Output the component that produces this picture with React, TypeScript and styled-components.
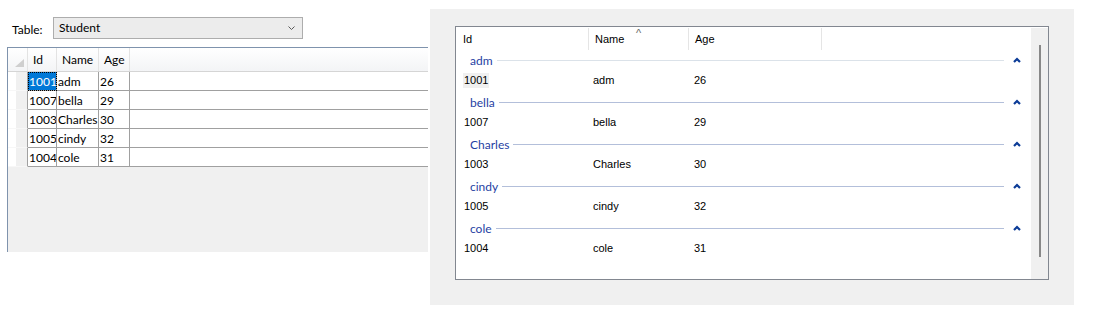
import React from 'react';
import styled, { createGlobalStyle } from 'styled-components';

const GlobalStyle = createGlobalStyle`
  html, body {
    margin: 0;
    padding: 0;
    background: #ffffff;
  }
  #root {
    width: 1095px;
    height: 320px;
    overflow: hidden;
  }
`;

type Student = { id: string; name: string; age: string };

const students: Student[] = [
  { id: '1001', name: 'adm', age: '26' },
  { id: '1007', name: 'bella', age: '29' },
  { id: '1003', name: 'Charles', age: '30' },
  { id: '1005', name: 'cindy', age: '32' },
  { id: '1004', name: 'cole', age: '31' },
];

const gridCols = [
  { key: 'id', title: 'Id', width: 29 },
  { key: 'name', title: 'Name', width: 42 },
  { key: 'age', title: 'Age', width: 31 },
] as const;

const listCols = [
  { key: 'id', title: 'Id', width: 133, pad: 7, cellPad: 7 },
  { key: 'name', title: 'Name', width: 100, pad: 6, cellPad: 3, sorted: true },
  { key: 'age', title: 'Age', width: 133, pad: 6, cellPad: 4 },
] as const;

const uiFont = `'Segoe UI', Lato, 'Noto Sans', sans-serif`;

export default function App() {
  return (
    <>
      <GlobalStyle />
      <Page>
        <LeftPane>
          <FilterRow>
            <FilterLabel>Table:</FilterLabel>
            <ComboBox>
              <ComboText>Student</ComboText>
              <svg width="7" height="4" viewBox="0 0 7 4">
                <path d="M0.5 0.5 L3.5 3.5 L6.5 0.5" fill="none" stroke="#5a5a5a" strokeWidth="1" />
              </svg>
            </ComboBox>
          </FilterRow>

          <Grid>
            <GridHeader>
              <CornerCell>
                <svg width="9" height="8" viewBox="0 0 9 8">
                  <path d="M9 0 L9 8 L0 8 Z" fill="#cfcfcf" />
                </svg>
              </CornerCell>
              {gridCols.map((c) => (
                <HeaderCell key={c.key} $width={c.width}>
                  {c.title}
                </HeaderCell>
              ))}
              <HeaderFill />
            </GridHeader>
            {students.map((s, i) => (
              <GridRow key={s.id}>
                <RowHeaderCell />
                <GridCell $width={gridCols[0].width} $selected={i === 0}>
                  {s.id}
                </GridCell>
                <GridCell $width={gridCols[1].width}>{s.name}</GridCell>
                <GridCell $width={gridCols[2].width}>{s.age}</GridCell>
                <RowFill />
              </GridRow>
            ))}
          </Grid>
        </LeftPane>

        <RightPane>
          <ListView>
            <ListContent>
              <ListHeader>
                {listCols.map((c) => (
                  <ListHeaderCell key={c.key} $width={c.width} $pad={c.pad}>
                    {'sorted' in c && c.sorted && <SortArrow>^</SortArrow>}
                    {c.title}
                  </ListHeaderCell>
                ))}
              </ListHeader>
              {students.map((s, i) => (
                <Group key={s.id}>
                  <GroupHeader>
                    <GroupTitle>{s.name}</GroupTitle>
                    <GroupLine $faint={i === 0} />
                    <svg width="8" height="6" viewBox="0 0 8 6">
                      <path d="M1 5 L4 2 L7 5" fill="none" stroke="#0c3c97" strokeWidth="2.2" />
                    </svg>
                  </GroupHeader>
                  <ItemRow>
                    {listCols.map((c) => (
                      <ItemCell key={c.key} $width={c.width} $pad={c.cellPad}>
                        <ItemText $focused={i === 0 && c.key === 'id'}>
                          {s[c.key]}
                        </ItemText>
                      </ItemCell>
                    ))}
                  </ItemRow>
                </Group>
              ))}
            </ListContent>
            <ScrollBar>
              <ScrollThumb />
            </ScrollBar>
          </ListView>
        </RightPane>
      </Page>
    </>
  );
}

const Page = styled.div`
  display: flex;
  align-items: flex-start;
  width: 1095px;
  height: 320px;
  background: #ffffff;
`;

const LeftPane = styled.div`
  width: 428px;
  padding-top: 17px;
  font-family: ${uiFont};
  font-size: 12px;
  color: #000000;
`;

const FilterRow = styled.div`
  display: flex;
  align-items: center;
  height: 22px;
  padding-left: 12px;
`;

const FilterLabel = styled.span`
  width: 41px;
  padding-top: 2px;
`;

const ComboBox = styled.div`
  box-sizing: border-box;
  width: 250px;
  height: 22px;
  display: flex;
  align-items: center;
  justify-content: space-between;
  padding: 0 7px 0 5px;
  border: 1px solid #adadad;
  background: #ececec;
`;

const ComboText = styled.span`
  line-height: 18px;
`;

const Grid = styled.div`
  box-sizing: border-box;
  margin: 8px 0 0 7px;
  width: 421px;
  height: 205px;
  border-left: 1px solid #7f93ad;
  border-top: 1px solid #7f93ad;
  background: #f0f0f0;
`;

const GridHeader = styled.div`
  display: flex;
  height: 23px;
  border-bottom: 1px solid #d5d5d5;
  background: linear-gradient(#ffffff, #f3f4f6);
`;

const CornerCell = styled.div`
  box-sizing: border-box;
  width: 20px;
  display: flex;
  align-items: flex-end;
  justify-content: flex-end;
  padding: 0 3px 4px 0;
  border-right: 1px solid #e3e3e3;
`;

const HeaderCell = styled.div<{ $width: number }>`
  box-sizing: border-box;
  width: ${(p) => p.$width}px;
  padding: 1px 0 0 5px;
  line-height: 22px;
  border-right: 1px solid #e3e3e3;
  white-space: nowrap;
`;

const HeaderFill = styled.div`
  flex: 1;
`;

const GridRow = styled.div`
  display: flex;
  height: 19px;
`;

const RowHeaderCell = styled.div`
  box-sizing: border-box;
  width: 20px;
  background: linear-gradient(to right, #ffffff 8px, #f0f0f0 8px);
  border-right: 1px solid #a0a0a0;
  border-bottom: 1px solid #f7f7f7;
`;

const GridCell = styled.div<{ $width: number; $selected?: boolean }>`
  box-sizing: border-box;
  width: ${(p) => p.$width}px;
  padding: 1px 0 0 1px;
  line-height: 17px;
  white-space: nowrap;
  overflow: hidden;
  border-right: 1px solid #a0a0a0;
  border-bottom: 1px solid #a0a0a0;
  background: ${(p) => (p.$selected ? '#0078d7' : '#ffffff')};
  color: ${(p) => (p.$selected ? '#ffffff' : '#000000')};
  outline: ${(p) => (p.$selected ? '1px dotted #000000' : 'none')};
  outline-offset: -1px;
`;

const RowFill = styled.div`
  flex: 1;
  background: #ffffff;
  border-bottom: 1px solid #a0a0a0;
`;

const RightPane = styled.div`
  box-sizing: border-box;
  margin: 9px 0 0 2px;
  width: 644px;
  height: 296px;
  padding: 17px 0 0 25px;
  background: #f0f0f0;
`;

const ListView = styled.div`
  box-sizing: border-box;
  display: flex;
  width: 594px;
  height: 254px;
  border: 1px solid #828790;
  background: #ffffff;
`;

const ListContent = styled.div`
  flex: 1;
  font-family: 'Liberation Sans', Arial, sans-serif;
  font-size: 11px;
  color: #000000;
`;

const ListHeader = styled.div`
  display: flex;
  height: 23px;
  padding-top: 1px;
  box-sizing: border-box;
`;

const ListHeaderCell = styled.div<{ $width: number; $pad: number }>`
  position: relative;
  box-sizing: border-box;
  width: ${(p) => p.$width}px;
  padding-left: ${(p) => p.$pad}px;
  line-height: 22px;
  border-right: 1px solid #e5e5e5;
`;

const SortArrow = styled.span`
  position: absolute;
  top: -6px;
  left: 0;
  right: 0;
  text-align: center;
  font-size: 11px;
  color: #666666;
`;

const Group = styled.div`
  display: flex;
  flex-direction: column;
`;

const GroupHeader = styled.div`
  display: flex;
  align-items: center;
  height: 20px;
  padding: 0 10px 0 14px;
`;

const GroupTitle = styled.span`
  font-family: ${uiFont};
  font-size: 12px;
  color: #1f3fa3;
  padding-right: 4px;
`;

const GroupLine = styled.div<{ $faint?: boolean }>`
  flex: 1;
  height: 1px;
  margin-right: 9px;
  background: ${(p) => (p.$faint ? '#dbe2e9' : '#b3bfda')};
`;

const ItemRow = styled.div`
  display: flex;
  height: 22px;
  align-items: center;
`;

const ItemCell = styled.div<{ $width: number; $pad: number }>`
  box-sizing: border-box;
  width: ${(p) => p.$width}px;
  padding-left: ${(p) => p.$pad}px;
  padding-bottom: 2px;
`;

const ItemText = styled.span<{ $focused?: boolean }>`
  padding: 1px 1px 2px;
  background: ${(p) => (p.$focused ? '#f0f0f0' : 'transparent')};
`;

const ScrollBar = styled.div`
  width: 17px;
  margin: 1px 0 0;
  background: #f0f0f0;
  display: flex;
  justify-content: center;
  padding-top: 17px;
  box-sizing: border-box;
`;

const ScrollThumb = styled.div`
  width: 2px;
  height: 212px;
  margin-left: 1px;
  background: #888888;
`;
